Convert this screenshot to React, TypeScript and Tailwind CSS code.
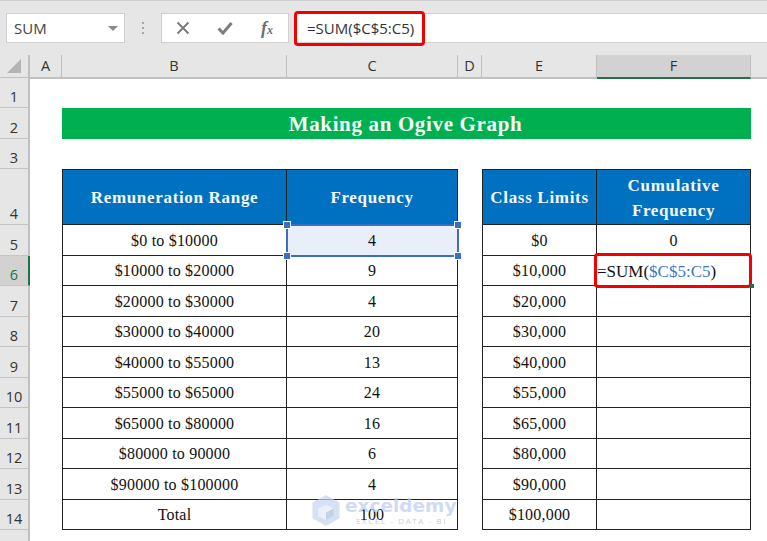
const columns = ["A", "B", "C", "D", "E", "F"]

const rows = [
  ["$0 to $10000", "4", "$0", "0"],
  ["$10000 to $20000", "9", "$10,000", ""],
  ["$20000 to $30000", "4", "$20,000", ""],
  ["$30000 to $40000", "20", "$30,000", ""],
  ["$40000 to $55000", "13", "$40,000", ""],
  ["$55000 to $65000", "24", "$55,000", ""],
  ["$65000 to $80000", "16", "$65,000", ""],
  ["$80000 to 90000", "6", "$80,000", ""],
  ["$90000 to $100000", "4", "$90,000", ""],
  ["Total", "100", "$100,000", ""],
]

function RowHead({ n, active }: { n: number; active?: boolean }) {
  return (
    <div
      className={`flex items-end justify-center pb-[1px] font-['Open_Sans',sans-serif] text-[14.5px] leading-[18px] border-b border-r-2 border-b-[#c4c4c4] ${
        active ? "bg-[#d2d2d2] border-r-[#217346] text-[#217346]" : "bg-[#e6e6e6] border-r-[#c0c0c0] text-[#333]"
      }`}
    >
      {n}
    </div>
  )
}

function Cell({ children, className = "" }: { children?: React.ReactNode; className?: string }) {
  return (
    <div className={`flex items-center justify-center pt-[2px] border-r border-b border-[#222] text-[#111] text-[16px] tracking-[0.2px] ${className}`}>
      {children}
    </div>
  )
}

function HeadCell({ children, className = "" }: { children: React.ReactNode; className?: string }) {
  return (
    <div className={`flex items-center justify-center pt-[1px] border-t border-r border-b border-[#222] bg-[#0070c0] text-[#f4f8fc] text-center font-bold text-[17px] leading-[25px] tracking-[0.68px] ${className}`}>
      {children}
    </div>
  )
}

function Handle({ className }: { className: string }) {
  return <div className={`absolute size-[8px] bg-[#3a6fc9] border border-white ${className}`} />
}

function Watermark() {
  return (
    <div className="absolute left-[312px] top-[417px] flex items-start gap-[5px] opacity-70 pointer-events-none">
      <svg width="28" height="31" viewBox="0 0 28 32">
        <path d="M14 0 L28 8 L28 24 L14 32 L0 24 L0 8 Z" fill="#c6d5f2" />
        <path d="M14 10 L22 14 L22 22 L14 26 L6 22 L6 14 Z" fill="#e3ebfa" />
        <path d="M14 18 L22 14 L22 22 L14 26 Z" fill="#aebfdf" />
      </svg>
      <div className="flex flex-col items-start">
        <span className="text-[#bccdf0] font-bold text-[18.5px] leading-[21px] font-['DejaVu_Sans',sans-serif]">exceldemy</span>
        <span className="text-[#b9b9b9] text-[8px] leading-[10px] tracking-[1.6px] pl-[11px] font-['Open_Sans',sans-serif]">EXCEL - DATA - BI</span>
      </div>
    </div>
  )
}

export default function App() {
  return (
    <div className="w-[767px] h-[541px] overflow-hidden bg-white font-['Liberation_Serif',serif]">
      {/* formula bar */}
      <div className="h-[55px] bg-[#e6e6e6] border-t border-[#cfcfcf] flex items-start pt-[12px] pl-[6px] font-['Open_Sans',sans-serif]">
        <div className="w-[119px] h-[30px] bg-white border border-[#d0d0d0] flex items-center justify-between pl-[7px] pr-[6px] text-[15px] text-[#444]">
          SUM
          <div className="border-x-[5px] border-x-transparent border-t-[5px] border-t-[#8a8a8a]" />
        </div>
        <div className="w-[36px] h-[30px] flex flex-col items-center justify-center gap-[3px]">
          <div className="size-[2px] bg-[#a6a6a6]" />
          <div className="size-[2px] bg-[#a6a6a6]" />
          <div className="size-[2px] bg-[#a6a6a6]" />
        </div>
        <div className="w-[128px] h-[30px] bg-white border border-[#d0d0d0] flex items-center pl-[14px]">
          <svg width="14" height="14" viewBox="0 0 14 14" className="mr-[27px]">
            <path d="M1.5 1.5 L12.5 12.5 M12.5 1.5 L1.5 12.5" stroke="#7d7d7d" strokeWidth="2" fill="none" />
          </svg>
          <svg width="16" height="14" viewBox="0 0 16 14" className="mr-[28px]">
            <path d="M1.5 7.5 L6 12 L14.5 2" stroke="#7d7d7d" strokeWidth="3" fill="none" />
          </svg>
          <span className="font-['Liberation_Serif',serif] italic font-bold text-[#6f6f6f] text-[18px] leading-none">
            f<span className="text-[12px]">x</span>
          </span>
        </div>
        <div className="relative ml-[6px] flex-1 h-[30px] bg-white border-y border-[#d0d0d0] flex items-center pl-[12px] text-[15px] text-[#333]">
          =SUM($C$5:C5)
          <div className="absolute left-[-1px] top-[-3px] w-[131px] h-[35px] border-[3px] border-[#f40000] rounded-[4px]" />
        </div>
      </div>

      {/* column headers */}
      <div className="h-[23px] grid grid-cols-[30px_32px_225px_171px_24px_115px_154px_16px] bg-[#e6e6e6] font-['Open_Sans',sans-serif] text-[14.5px] text-[#333]">
        <div className="border-b-2 border-r-2 border-[#c0c0c0] flex items-center justify-center">
          <div className="border-l-[14px] border-l-transparent border-b-[14px] border-b-[#b4b4b4]" />
        </div>
        {columns.map((c) => (
          <div
            key={c}
            className={`flex items-center justify-center border-r border-[#bfbfbf] ${
              c === "F" ? "bg-[#d2d2d2] border-b-2 border-b-[#217346]" : "border-b-2 border-b-[#c0c0c0]"
            }`}
          >
            {c}
          </div>
        ))}
        <div className="border-b-2 border-[#c0c0c0]" />
      </div>

      {/* sheet */}
      <div className="relative h-[463px] grid grid-cols-[30px_32px_225px_171px_24px_115px_154px_16px] grid-rows-[30px_31px_30px_56px_repeat(10,30.5px)_1fr]">
        <RowHead n={1} />
        <div className="col-span-7" />
        <RowHead n={2} />
        <div />
        <div className="col-span-5 bg-[#00b050] flex items-center justify-center text-[#f4fbf6] font-bold text-[21px] tracking-[0.65px] pr-[2px] pt-[2px]">
          Making an Ogive Graph
        </div>
        <div />
        <RowHead n={3} />
        <div className="col-span-7" />
        <RowHead n={4} />
        <div />
        <HeadCell className="border-l">Remuneration Range</HeadCell>
        <HeadCell>Frequency</HeadCell>
        <div />
        <HeadCell className="border-l">Class Limits</HeadCell>
        <HeadCell>
          Cumulative
          <br />
          Frequency
        </HeadCell>
        <div />

        {rows.map((r, i) => (
          <div key={r[0]} className="contents">
            <RowHead n={i + 5} active={i === 1} />
            <div />
            <Cell className="border-l">{r[0]}</Cell>
            <Cell className={i === 0 ? "bg-[#e9eff9]" : ""}>{r[1]}</Cell>
            <div />
            <Cell className="border-l">{r[2]}</Cell>
            {i === 1 ? (
              <Cell className="justify-start text-[17px] tracking-normal">
                =SUM(<span className="text-[#3a78c9]">$C$5:C5</span>)
              </Cell>
            ) : (
              <Cell>{r[3]}</Cell>
            )}
            <div />
          </div>
        ))}

        <div className="bg-[#e6e6e6] border-r-2 border-[#c0c0c0]" />

        {/* C5 selection */}
        <div className="absolute left-[286px] top-[146px] w-[173px] h-[33px] border-[2px] border-[#3a6fc9] pointer-events-none">
          <Handle className="left-[-5px] top-[-5px]" />
          <Handle className="right-[-5px] top-[-5px]" />
          <Handle className="left-[-5px] bottom-[-5px]" />
          <Handle className="right-[-5px] bottom-[-5px]" />
        </div>

        {/* F6 highlight */}
        <div className="absolute left-[594px] top-[175px] w-[158px] h-[35px] border-[3px] border-[#f40000] rounded-[4px] pointer-events-none" />
        <div className="absolute left-[750px] top-[206px] size-[4px] bg-[#217346]" />

        <Watermark />
      </div>
    </div>
  )
}
